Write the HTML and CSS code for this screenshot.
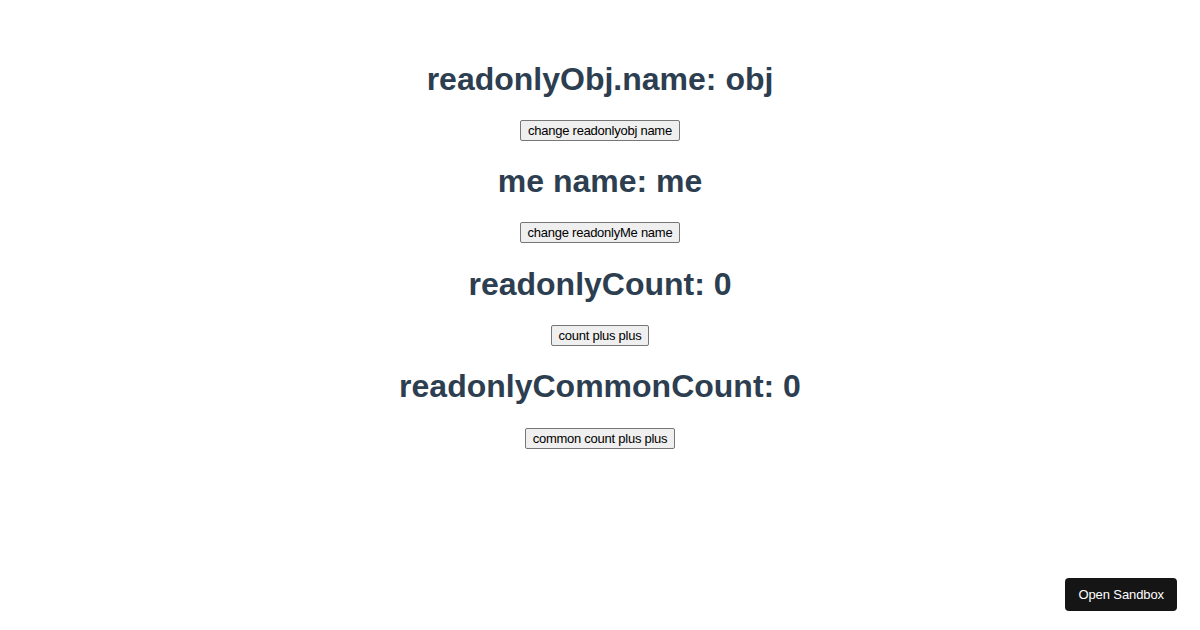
FILE: index.html
```html
<!DOCTYPE html>
<html>
<head>
<meta charset="utf-8">
<link rel="stylesheet" href="styles.css">
</head>
<body>
<div class="app">
  <h1 class="title">readonlyObj.name: obj</h1>
  <button class="btn">change readonlyobj name</button>
  <h1 class="title">me name: me</h1>
  <button class="btn">change readonlyMe name</button>
  <h1 class="title">readonlyCount: 0</h1>
  <button class="btn">count plus plus</button>
  <h1 class="title">readonlyCommonCount: 0</h1>
  <button class="btn">common count plus plus</button>
</div>
<a class="sandbox">Open Sandbox</a>
</body>
</html>
```
FILE: styles.css
```css
html, body {
  background: #fff;
}
body {
  margin: 8px;
}
.app {
  font-family: "Liberation Sans", Arial, Helvetica, sans-serif;
  -webkit-font-smoothing: antialiased;
  text-align: center;
  color: #2c3e50;
  margin-top: 52.5px;
}
.title {
  font-size: 32px;
  font-weight: bold;
  margin: 22.3px 0;
}
.btn {
  font-family: "Liberation Sans", Arial, sans-serif;
  font-size: 13px;
  letter-spacing: -0.25px;
  color: #000;
  background: #efefef;
  border: 1px solid #767676;
  border-radius: 2px;
  padding: 2px 7px 2px 7px;
  line-height: 15px;
}
.sandbox {
  position: fixed;
  right: 23px;
  bottom: 19px;
  background: #151515;
  color: #fff;
  font-family: "Liberation Sans", Arial, sans-serif;
  font-size: 13px;
  letter-spacing: -0.1px;
  padding: 9px 13px 9px 13px;
  border-radius: 4px;
  line-height: 15px;
}
```
